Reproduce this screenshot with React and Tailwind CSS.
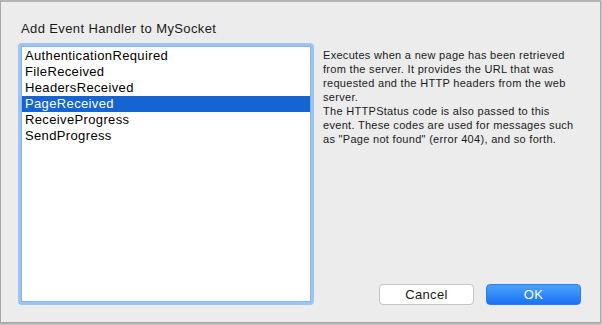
export default function App() {
  const items = [
    "AuthenticationRequired",
    "FileReceived",
    "HeadersReceived",
    "PageReceived",
    "ReceiveProgress",
    "SendProgress",
  ];
  const font = { fontFamily: '"Liberation Sans", Arial, sans-serif' };
  return (
    <div className="w-[602px] h-[325px] bg-[#dcdcdc] overflow-hidden" style={font}>
      <div className="w-[601px] h-[323px] bg-[#ececec] border-t-2 border-t-[#b4b4b4] border-l border-r border-b border-[#a9a9a9] shadow-[0_1px_2px_rgba(0,0,0,0.3)] flex flex-col pl-[17px]">
        <div className="pt-[19px] pl-[3px] text-[13px] leading-[16px] tracking-[0.38px] text-[#1a1a1a]">
          Add Event Handler to MySocket
        </div>
        <div className="flex mt-[6px]">
          <div className="w-[296px] h-[262px] rounded-[4px] border-[3px] border-[#9cc5f5] shrink-0">
            <div className="w-full h-full bg-white border border-[#86b6ee] pt-[1px]">
              {items.map((it, i) => (
                <div
                  key={it}
                  className={
                    "h-[16px] leading-[16px] pl-[3px] text-[13px] tracking-[0.36px] " +
                    (i === 3 ? "bg-[#1464d4] text-white" : "text-black")
                  }
                >
                  {it}
                </div>
              ))}
            </div>
          </div>
          <div className="flex-1 flex flex-col pl-[9px] pr-[20px] pt-[5px]">
            <div className="text-[11px] leading-[14px] tracking-[0.3px] text-[#1a1a1a] w-[258px]">
              <div>
                Executes when a new page has been retrieved from the server. It provides the URL that was requested and the HTTP headers from the web server.
              </div>
              <div>
                The HTTPStatus code is also passed to this event. These codes are used for messages such as "Page not found" (error 404), and so forth.
              </div>
            </div>
            <div className="mt-auto flex justify-end gap-[12px]">
              <button className="w-[95px] h-[21px] rounded-[4px] bg-white border border-[#c4c4c4] text-[13px] tracking-[0.3px] text-[#1a1a1a] leading-[19px]">
                Cancel
              </button>
              <button className="w-[95px] h-[21px] rounded-[4px] bg-gradient-to-b from-[#4aa2fc] to-[#1b71f5] border border-[#2a7ef0] text-[13px] tracking-[0.3px] text-white leading-[19px]">
                OK
              </button>
            </div>
          </div>
        </div>
      </div>
    </div>
  );
}
